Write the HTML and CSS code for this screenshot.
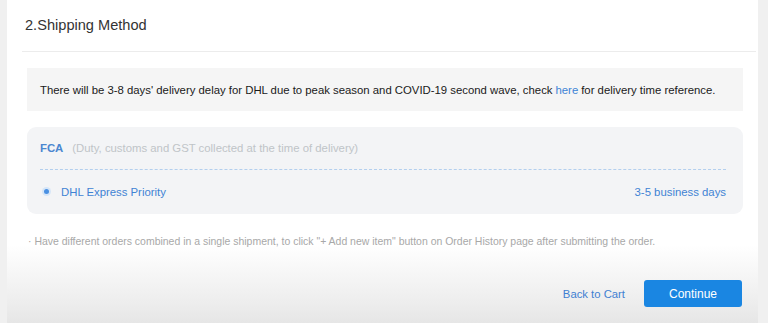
FILE: index.html
```html
<!DOCTYPE html>
<html>
<head>
<meta charset="utf-8">
<link rel="stylesheet" href="styles.css">
</head>
<body>
<div class="page">
  <div class="card">
    <div class="header"><h2 class="title">2.Shipping Method</h2></div>
    <div class="content">
      <div class="notice">There will be 3-8 days' delivery delay for DHL due to peak season and COVID-19 second wave, check <a class="link">here</a> for delivery time reference.</div>
      <div class="options">
        <div class="fca"><span class="fca-name">FCA</span><span class="fca-desc">(Duty, customs and GST collected at the time of delivery)</span></div>
        <div class="option">
          <span class="radio"><span class="dot"></span></span>
          <span class="opt-name">DHL Express Priority</span>
          <span class="opt-time">3-5 business days</span>
        </div>
      </div>
      <div class="tip">· Have different orders combined in a single shipment, to click "+ Add new item" button on Order History page after submitting the order.</div>
      <div class="actions">
        <a class="back">Back to Cart</a>
        <button class="continue">Continue</button>
      </div>
    </div>
  </div>
</div>
</body>
</html>
```
FILE: styles.css
```css
html, body {
  margin: 0;
  padding: 0;
}
body {
  background: #f0f0f0;
  font-family: "Liberation Sans", Arial, sans-serif;
  width: 768px;
  height: 323px;
  overflow: hidden;
}
.page {
  display: flex;
  padding-left: 7px;
  height: 323px;
}
.card {
  width: 751px;
  height: 323px;
  background: linear-gradient(to bottom, #ffffff 0px, #ffffff 245px, #eeeeee 300px, #e6e6e6 323px);
}
.header {
  margin: 0 2px 0 15px;
  height: 52px;
  border-bottom: 1px solid #ececec;
  box-sizing: border-box;
  padding: 16px 0 0 3px;
}
.title {
  margin: 0;
  font-size: 14.6px;
  font-weight: normal;
  color: #333;
  line-height: 18px;
}
.content {
  padding: 16px 15px 0 20px;
}
.notice {
  height: 43px;
  box-sizing: border-box;
  background: #f5f5f5;
  padding: 0 13px;
  display: flex;
  align-items: center;
  font-size: 11.35px;
  color: #1a1a1a;
  white-space: nowrap;
}
.link {
  color: #3d84d6;
  margin: 0 3px;
}
.options {
  margin-top: 16px;
  height: 87px;
  box-sizing: border-box;
  background: #f3f4f6;
  border-radius: 9px;
  padding: 0 17px 0 13px;
}
.fca {
  height: 43px;
  box-sizing: border-box;
  border-bottom: 1px dashed #b3cfee;
  display: flex;
  align-items: center;
  font-size: 11.35px;
}
.fca-name {
  color: #4a86d0;
  font-weight: bold;
  margin-right: 9px;
}
.fca-desc {
  color: #c0c4c8;
}
.option {
  height: 40px;
  box-sizing: border-box;
  padding-top: 3px;
  display: flex;
  align-items: center;
  font-size: 11.35px;
  color: #3f83d4;
}
.radio {
  width: 9px;
  height: 9px;
  border-radius: 50%;
  background: #d6e6f8;
  display: flex;
  align-items: center;
  justify-content: center;
  margin-left: 2px;
  margin-right: 10px;
}
.dot {
  width: 5px;
  height: 5px;
  border-radius: 50%;
  background: #4a90e2;
}
.opt-name {
  flex: 1;
}
.tip {
  margin-top: 22px;
  padding-left: 1px;
  font-size: 10.48px;
  color: #a8a8a8;
  white-space: nowrap;
}
.actions {
  display: flex;
  justify-content: flex-end;
  align-items: center;
  margin-top: 33px;
  padding-right: 1px;
}
.back {
  font-size: 11.3px;
  color: #3f7fd2;
  margin-right: 19px;
}
.continue {
  width: 98px;
  height: 27px;
  border: none;
  border-radius: 3px;
  background: #1a86e2;
  color: #fff;
  font-family: "Liberation Sans", Arial, sans-serif;
  font-size: 12px;
  padding: 0;
}
```
